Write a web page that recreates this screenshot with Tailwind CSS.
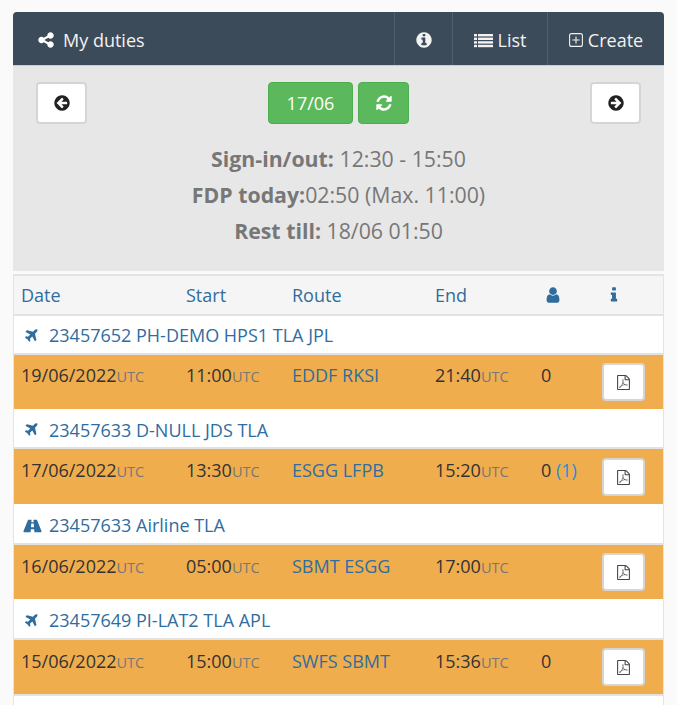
<!DOCTYPE html>
<html lang="en">
<head>
    <meta charset="UTF-8">
    <title>My duties</title>
    <script src="https://cdn.jsdelivr.net/npm/@tailwindcss/browser@4"></script>
</head>
<body class="bg-[#fafafa] text-[#333] font-['Open_Sans',sans-serif] text-[18px] h-[705px] overflow-hidden">
    <svg class="hidden" xmlns="http://www.w3.org/2000/svg">
        <symbol id="i-share" viewBox="0 0 1792 1792"><path d="M1344 1024q133 0 226.5 93.5t93.5 226.5-93.5 226.5-226.5 93.5-226.5-93.5-93.5-226.5q0-12 2-34l-360-180q-92 86-218 86-133 0-226.5-93.5t-93.5-226.5 93.5-226.5 226.5-93.5q126 0 218 86l360-180q-2-22-2-34 0-133 93.5-226.5t226.5-93.5 226.5 93.5 93.5 226.5-93.5 226.5-226.5 93.5q-126 0-218-86l-360 180q2 22 2 34t-2 34l360 180q92-86 218-86z"/></symbol>
        <symbol id="i-left" viewBox="0 0 1792 1792"><path d="M1408 960v-128q0-26-19-45t-45-19h-502l189-189q19-19 19-45t-19-45l-91-91q-18-18-45-18t-45 18l-362 362-91 91q-18 18-18 45t18 45l91 91 362 362q18 18 45 18t45-18l91-91q18-18 18-45t-18-45l-189-189h502q26 0 45-19t19-45zm256-64q0 209-103 385.5t-279.5 279.5-385.5 103-385.5-103-279.5-279.5-103-385.5 103-385.5 279.5-279.5 385.5-103 385.5 103 279.5 279.5 103 385.5z"/></symbol>
        <symbol id="i-right" viewBox="0 0 1792 1792"><path d="M1413 896q0-27-18-45l-91-91-362-362q-18-18-45-18t-45 18l-91 91q-18 18-18 45t18 45l189 189h-502q-26 0-45 19t-19 45v128q0 26 19 45t45 19h502l-189 189q-19 19-19 45t19 45l91 91q18 18 45 18t45-18l362-362 91-91q18-18 18-45zm251 0q0 209-103 385.5t-279.5 279.5-385.5 103-385.5-103-279.5-279.5-103-385.5 103-385.5 279.5-279.5 385.5-103 385.5 103 279.5 279.5 103 385.5z"/></symbol>
        <symbol id="i-refresh" viewBox="0 0 1792 1792"><path d="M1639 1056q0 5-1 7-64 268-268 434.5t-478 166.5q-146 0-282.5-55t-243.5-157l-129 129q-19 19-45 19t-45-19-19-45v-448q0-26 19-45t45-19h448q26 0 45 19t19 45-19 45l-137 137q71 66 161 102t187 36q134 0 250-65t186-179q11-17 53-117 8-23 30-23h192q13 0 22.5 9.5t9.5 22.5zm25-800v448q0 26-19 45t-45 19h-448q-26 0-45-19t-19-45 19-45l138-138q-148-137-349-137-134 0-250 65t-186 179q-11 17-53 117-8 23-30 23h-199q-13 0-22.5-9.5t-9.5-22.5v-7q65-268 270-434.5t480-166.5q146 0 284 55.5t245 156.5l130-129q19-19 45-19t45 19 19 45z"/></symbol>
        <symbol id="i-info-circle" viewBox="0 0 1792 1792"><path d="M1152 1376v-160q0-14-9-23t-23-9h-96v-512q0-14-9-23t-23-9h-320q-14 0-23 9t-9 23v160q0 14 9 23t23 9h96v320h-96q-14 0-23 9t-9 23v160q0 14 9 23t23 9h448q14 0 23-9t9-23zm-128-896v-160q0-14-9-23t-23-9h-192q-14 0-23 9t-9 23v160q0 14 9 23t23 9h192q14 0 23-9t9-23zm640 416q0 209-103 385.5t-279.5 279.5-385.5 103-385.5-103-279.5-279.5-103-385.5 103-385.5 279.5-279.5 385.5-103 385.5 103 279.5 279.5 103 385.5z"/></symbol>
        <symbol id="i-plane" viewBox="0 0 1792 1792"><path d="M1376 160q44 52 12 148t-108 172l-161 161 160 696q5 19-12 33l-128 96q-7 6-19 6-4 0-7-1-15-3-21-16l-279-508-259 259 53 194q5 17-8 31l-96 96q-9 9-23 9h-2q-15-2-24-13l-189-252-252-189q-11-7-13-23-1-13 9-25l96-97q9-9 23-9 6 0 8 1l194 53 259-259-508-279q-14-8-17-24-2-16 9-27l128-128q14-13 30-8l665 159 160-160q76-76 172-108t148 12z"/></symbol>
        <symbol id="i-road" viewBox="0 0 1920 1792"><path d="M1111 996v-4l-24-320q-1-13-11-22.5t-23-9.5h-186q-13 0-23 9.5t-11 22.5l-24 320v4q-1 12 8 20t21 8h244q12 0 21-8t8-20zm759 467q0 73-46 73h-704q13 0 22-9.5t8-22.5l-20-256q-1-13-11-22.5t-23-9.5h-272q-13 0-23 9.5t-11 22.5l-20 256q-1 13 8 22.5t22 9.5h-704q-46 0-46-73 0-54 26-116l417-1044q8-19 26-33t38-14h339q-13 0-23 9.5t-11 22.5l-15 192q-1 14 8 23t22 9h166q13 0 22-9t8-23l-15-192q-1-13-11-22.5t-23-9.5h339q20 0 38 14t26 33l417 1044q26 62 26 116z"/></symbol>
        <symbol id="i-user" viewBox="0 0 1792 1792"><path d="M1536 1399q0 109-62.5 187t-150.5 78h-854q-88 0-150.5-78t-62.5-187q0-85 8.5-160.5t31.5-152 58.5-131 94-89 134.5-34.5q131 128 313 128t313-128q76 0 134.5 34.5t94 89 58.5 131 31.5 152 8.5 160.5zm-256-887q0 159-112.5 271.5t-271.5 112.5-271.5-112.5-112.5-271.5 112.5-271.5 271.5-112.5 271.5 112.5 112.5 271.5z"/></symbol>
        <symbol id="i-info" viewBox="0 0 1792 1792"><path d="M1216 1344v128q0 26-19 45t-45 19h-512q-26 0-45-19t-19-45v-128q0-26 19-45t45-19h64v-384h-64q-26 0-45-19t-19-45v-128q0-26 19-45t45-19h384q26 0 45 19t19 45v576h64q26 0 45 19t19 45zm-128-1152v192q0 26-19 45t-45 19h-256q-26 0-45-19t-19-45v-192q0-26 19-45t45-19h256q26 0 45 19t19 45z"/></symbol>
        <symbol id="i-pdf" viewBox="0 0 1792 1792"><path d="M1596 380q28 28 48 76t20 88v1152q0 40-28 68t-68 28h-1344q-40 0-68-28t-28-68v-1600q0-40 28-68t68-28h896q40 0 88 20t76 48zm-444-244v376h376q-10-29-22-41l-313-313q-12-12-41-22zm384 1528v-1024h-416q-40 0-68-28t-28-68v-416h-768v1536h1280zm-514-593q33 26 84 56 59-7 117-7 147 0 177 49 16 22 2 52 0 1-1 2l-2 2v1q-6 38-71 38-48 0-115-20t-130-53q-221 24-392 83-153 262-242 262-15 0-28-7l-24-12q-1-1-6-5-10-10-6-36 9-40 56-91.5t132-96.5q14-9 23 6 2 2 2 4 52-85 107-197 68-136 104-262-24-82-30.5-159.5t6.5-127.5q11-40 42-40h22q23 0 35 15 18 21 9 68-2 6-4 8 1 3 1 8v30q-2 123-14 192 55 164 146 238zm-576 411q52-24 137-158-51 40-87.5 84t-49.5 74zm398-920q-15 42-2 132 1-7 7-44 0-3 7-43 1-4 4-8-1-1-1-2-1-2-1-3-1-22-13-36 0 1-1 2v2zm-124 661q135-54 284-81-2-1-13-9.5t-16-13.5q-76-67-127-176-27 86-83 197-30 56-45 83zm646-16q-24-24-140-24 76 28 124 28 14 0 18-1 0-1-2-3z"/></symbol>
    </svg>

    <div class="ml-[13px] mt-[12px] w-[651px]">
        <!-- title bar -->
        <header class="flex h-[54px] rounded-t-[4px] bg-[#3c4b59] text-[#f2f2f2] border-b border-[#c9cdd0]">
            <div class="flex flex-1 items-center pl-[24px] pt-[3px] gap-[8px]">
                <svg class="w-[18px] h-[18px] fill-current text-white"><use href="#i-share"/></svg>
                <span>My duties</span>
            </div>
            <div class="flex w-[58px] items-center justify-center pt-[3px] border-l border-[#4e6072]">
                <svg class="w-[18px] h-[18px] fill-current"><use href="#i-info-circle"/></svg>
            </div>
            <div class="flex w-[95px] items-center justify-center pt-[3px] gap-[5px] border-l border-[#4e6072]">
                <svg class="w-[19px] h-[15px] fill-current" viewBox="0 0 19 15">
                    <rect x="0" y="1" width="3" height="2.4"/><rect x="4" y="1" width="15" height="2.4"/>
                    <rect x="0" y="4.6" width="3" height="2.4"/><rect x="4" y="4.6" width="15" height="2.4"/>
                    <rect x="0" y="8.2" width="3" height="2.4"/><rect x="4" y="8.2" width="15" height="2.4"/>
                    <rect x="0" y="11.8" width="3" height="2.4"/><rect x="4" y="11.8" width="15" height="2.4"/>
                </svg>
                <span>List</span>
            </div>
            <div class="flex w-[117px] items-center justify-center pt-[3px] gap-[5px] border-l border-[#4e6072]">
                <svg class="w-[14px] h-[14px]" viewBox="0 0 14 14" fill="none" stroke="currentColor" stroke-width="1.1">
                    <rect x="0.6" y="0.6" width="12.8" height="12.8" rx="2"/>
                    <path d="M7 3.4v7.2M3.4 7h7.2"/>
                </svg>
                <span>Create</span>
            </div>
        </header>

        <!-- date nav and summary -->
        <section class="h-[205px] bg-[#e7e7e7] px-[23px] pt-[16px]">
            <div class="flex items-center justify-between">
                <button class="flex w-[51px] h-[42px] items-center justify-center bg-white border-2 border-[#d5d5d5] rounded-[4px] text-[#222]">
                    <svg class="w-[18px] h-[18px] fill-current"><use href="#i-left"/></svg>
                </button>
                <div class="flex gap-[5px]">
                    <button class="w-[85px] h-[42px] bg-[#5cb85c] border border-[#4cae4c] rounded-[4px] text-white">17/06</button>
                    <button class="flex w-[51px] h-[42px] items-center justify-center bg-[#5cb85c] border border-[#4cae4c] rounded-[4px] text-white">
                        <svg class="w-[18px] h-[18px] fill-current"><use href="#i-refresh"/></svg>
                    </button>
                </div>
                <button class="flex w-[51px] h-[42px] items-center justify-center bg-white border-2 border-[#d5d5d5] rounded-[4px] text-[#222]">
                    <svg class="w-[18px] h-[18px] fill-current"><use href="#i-right"/></svg>
                </button>
            </div>
            <div class="mt-[17px] text-center text-[21.3px] leading-[36px] text-[#777]">
                <p><b>Sign-in/out:</b> 12:30 - 15:50</p>
                <p><b>FDP today:</b>02:50 (Max. 11:00)</p>
                <p><b>Rest till:</b> 18/06 01:50</p>
            </div>
        </section>

        <!-- duties table -->
        <section class="mt-[3px] border-x border-[#e4e4e4] border-t-2 text-[#2f6d9f]">
            <div class="grid grid-cols-[165px_106px_143px_111px_56px_1fr] h-[40px] items-center bg-[#f5f5f5] border-b-2 border-[#e2e2e2] pl-[7px]">
                <span>Date</span>
                <span>Start</span>
                <span>Route</span>
                <span>End</span>
                <svg class="-ml-[2px] w-[18px] h-[18px] fill-current"><use href="#i-user"/></svg>
                <svg class="ml-[3px] w-[18px] h-[18px] fill-current"><use href="#i-info"/></svg>
            </div>
            <div class="flex h-[39px] items-center gap-[8px] bg-white border-b-2 border-[#e2e2e2] pl-[11px] pt-[2px]">
                <svg class="w-[16px] h-[16px] fill-current"><use href="#i-plane"/></svg>
                <span>23457652 PH-DEMO HPS1 TLA JPL</span>
            </div>
            <div class="grid grid-cols-[165px_106px_143px_111px_56px_1fr] h-[54px] bg-[#f0ad4e] pl-[7px] pt-[7px] text-[#333]">
                <span>19/06/2022<small class="text-[14.5px] text-[#777]">UTC</small></span>
                <span>11:00<small class="text-[14.5px] text-[#777]">UTC</small></span>
                <span class="text-[#2f6d9f]">EDDF RKSI</span>
                <span>21:40<small class="text-[14.5px] text-[#777]">UTC</small></span>
                <span class="-ml-[5px]">0</span>
                <button class="flex w-[43px] h-[38px] mt-[1px] items-center justify-center bg-white border-2 border-[#d5d5d5] rounded-[4px]">
                    <svg class="w-[15px] h-[15px] fill-current text-[#444]"><use href="#i-pdf"/></svg>
                </button>
            </div>
            <div class="flex h-[40px] items-center gap-[8px] bg-white border-b-2 border-[#e2e2e2] pl-[11px] pt-[4px]">
                <svg class="w-[16px] h-[16px] fill-current"><use href="#i-plane"/></svg>
                <span>23457633 D-NULL JDS TLA</span>
            </div>
            <div class="grid grid-cols-[165px_106px_143px_111px_56px_1fr] h-[55px] bg-[#f0ad4e] pl-[7px] pt-[8px] text-[#333]">
                <span>17/06/2022<small class="text-[14.5px] text-[#777]">UTC</small></span>
                <span>13:30<small class="text-[14.5px] text-[#777]">UTC</small></span>
                <span class="text-[#2f6d9f]">ESGG LFPB</span>
                <span>15:20<small class="text-[14.5px] text-[#777]">UTC</small></span>
                <span class="-ml-[5px] whitespace-nowrap">0 <span class="text-[#2a8fd0]">(1)</span></span>
                <button class="flex w-[43px] h-[38px] mt-[1px] items-center justify-center bg-white border-2 border-[#d5d5d5] rounded-[4px]">
                    <svg class="w-[15px] h-[15px] fill-current text-[#444]"><use href="#i-pdf"/></svg>
                </button>
            </div>
            <div class="flex h-[41px] items-center gap-[7px] bg-white border-b-2 border-[#e2e2e2] pl-[9px] pt-[4px]">
                <svg class="w-[19px] h-[18px] fill-current"><use href="#i-road"/></svg>
                <span>23457633 Airline TLA</span>
            </div>
            <div class="grid grid-cols-[165px_106px_143px_111px_56px_1fr] h-[54px] bg-[#f0ad4e] pl-[7px] pt-[8px] text-[#333]">
                <span>16/06/2022<small class="text-[14.5px] text-[#777]">UTC</small></span>
                <span>05:00<small class="text-[14.5px] text-[#777]">UTC</small></span>
                <span class="text-[#2f6d9f]">SBMT ESGG</span>
                <span>17:00<small class="text-[14.5px] text-[#777]">UTC</small></span>
                <span></span>
                <button class="flex w-[43px] h-[38px] items-center justify-center bg-white border-2 border-[#d5d5d5] rounded-[4px]">
                    <svg class="w-[15px] h-[15px] fill-current text-[#444]"><use href="#i-pdf"/></svg>
                </button>
            </div>
            <div class="flex h-[41px] items-center gap-[8px] bg-white border-b-2 border-[#e2e2e2] pl-[11px] pt-[4px]">
                <svg class="w-[16px] h-[16px] fill-current"><use href="#i-plane"/></svg>
                <span>23457649 PI-LAT2 TLA APL</span>
            </div>
            <div class="grid grid-cols-[165px_106px_143px_111px_56px_1fr] h-[54px] bg-[#f0ad4e] pl-[7px] pt-[8px] text-[#333]">
                <span>15/06/2022<small class="text-[14.5px] text-[#777]">UTC</small></span>
                <span>15:00<small class="text-[14.5px] text-[#777]">UTC</small></span>
                <span class="text-[#2f6d9f]">SWFS SBMT</span>
                <span>15:36<small class="text-[14.5px] text-[#777]">UTC</small></span>
                <span class="-ml-[5px]">0</span>
                <button class="flex w-[43px] h-[38px] items-center justify-center bg-white border-2 border-[#d5d5d5] rounded-[4px]">
                    <svg class="w-[15px] h-[15px] fill-current text-[#444]"><use href="#i-pdf"/></svg>
                </button>
            </div>
            <div class="h-[20px] bg-white border-t-2 border-[#e2e2e2]"></div>
        </section>
    </div>
</body>
</html>
